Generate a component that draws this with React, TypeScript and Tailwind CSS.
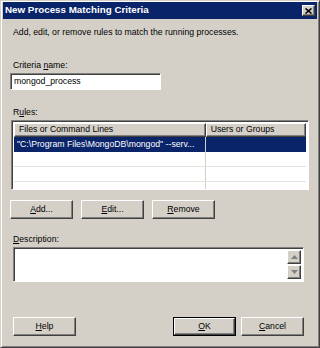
const raised =
  "border border-t-white border-l-white border-r-[#404040] border-b-[#404040] shadow-[inset_-1px_-1px_0_#808080] bg-[#d4d0c8]";
const sunken =
  "border border-t-[#808080] border-l-[#808080] border-r-white border-b-white shadow-[inset_1px_1px_0_#404040]";

function Btn({ label, mnemonic, isDefault }: { label: string; mnemonic: number; isDefault?: boolean }) {
  const text = (
    <span>
      {label.slice(0, mnemonic)}
      <span className="underline underline-offset-1">{label[mnemonic]}</span>
      {label.slice(mnemonic + 1)}
    </span>
  );
  if (isDefault) {
    return (
      <div className="w-[63px] h-[19px] border border-black">
        <div className={`${raised} w-full h-full flex items-center justify-center`}>{text}</div>
      </div>
    );
  }
  return <div className={`${raised} w-[63px] h-[19px] flex items-center justify-center`}>{text}</div>;
}

function Arrow({ up }: { up?: boolean }) {
  return (
    <div className={`${raised} w-[14px] h-[14px] flex items-center justify-center`}>
      <svg width="7" height="4" viewBox="0 0 7 4">
        {up ? <polygon points="3.5,0 7,4 0,4" fill="#808080" /> : <polygon points="0,0 7,0 3.5,4" fill="#808080" />}
      </svg>
    </div>
  );
}

export default function App() {
  const rows = [0, 1, 2, 3];
  return (
    <div
      className="w-[320px] h-[348px] bg-[#d4d0c8] border border-t-[#d4d0c8] border-l-[#d4d0c8] border-r-[#404040] border-b-[#404040] shadow-[inset_1px_1px_0_white,inset_-1px_-1px_0_#808080] px-[2px] pt-[1px] flex flex-col text-[8.7px] text-black"
      style={{ fontFamily: '"Liberation Sans", Arial, sans-serif' }}
    >
      <div className="h-[17px] bg-[#0a246a] flex items-center justify-between pl-[2px] pr-[2px]">
        <span className="text-white font-bold text-[9.8px]">New Process Matching Criteria</span>
        <div className={`${raised} w-[13px] h-[11px] flex items-center justify-center`}>
          <svg width="7" height="6" viewBox="0 0 7 6">
            <path d="M0.5 0.5 L6.5 5.5 M6.5 0.5 L0.5 5.5" stroke="black" strokeWidth="1.6" />
          </svg>
        </div>
      </div>

      <div className="flex flex-col pl-[7px] pr-[9px]">
        <div className="mt-[8px] pl-[3px] leading-[11px]">Add, edit, or remove rules to match the running processes.</div>

        <div className="mt-[22px] pl-[3px] leading-[11px]">
          Criteria <span className="underline underline-offset-1">n</span>ame:
        </div>
        <div className={`${sunken} mt-[2px] w-[151px] h-[17px] bg-white flex items-center pl-[3px]`}>mongod_process</div>

        <div className="mt-[17px] pl-[3px] leading-[11px]">
          R<span className="underline underline-offset-1">u</span>les:
        </div>
        <div className={`${sunken} mt-[2px] ml-[1px] w-[298px] h-[70px] bg-white overflow-hidden p-[2px]`}>
          <div className="flex h-[14px]">
            <div className={`${raised} w-[193px] flex items-center pl-[4px]`}>Files or Command Lines</div>
            <div className={`${raised} w-[101px] flex items-center pl-[4px]`}>Users or Groups</div>
          </div>
          {rows.map((r) => (
            <div key={r} className={`flex h-[15px] ${r === 0 ? "bg-[#0a246a] text-white" : "border-b border-[#e4e2dc]"}`}>
              <div className="w-[193px] border-r border-[#d4d0c8] flex items-center pl-[3px] whitespace-nowrap overflow-hidden">
                {r === 0 ? '"C:\\Program Files\\MongoDB\\mongod" --serv...' : ""}
              </div>
              <div className="w-[101px]" />
            </div>
          ))}
        </div>

        <div className="flex gap-[8px] mt-[10px]">
          <Btn label="Add..." mnemonic={0} />
          <Btn label="Edit..." mnemonic={0} />
          <Btn label="Remove" mnemonic={0} />
        </div>

        <div className="mt-[15px] pl-[3px] leading-[11px]">
          <span className="underline underline-offset-1">D</span>escription:
        </div>
        <div className={`${sunken} mt-[2px] ml-[3px] w-[291px] h-[35px] bg-white flex justify-end p-[2px]`}>
          <div className="flex flex-col justify-between">
            <Arrow up />
            <Arrow />
          </div>
        </div>

        <div className="flex mt-[35px] pl-[3px] pr-[4px]">
          <Btn label="Help" mnemonic={0} />
          <div className="flex-1" />
          <div className="flex gap-[5px]">
            <Btn label="OK" mnemonic={0} isDefault />
            <Btn label="Cancel" mnemonic={0} />
          </div>
        </div>
      </div>
    </div>
  );
}
